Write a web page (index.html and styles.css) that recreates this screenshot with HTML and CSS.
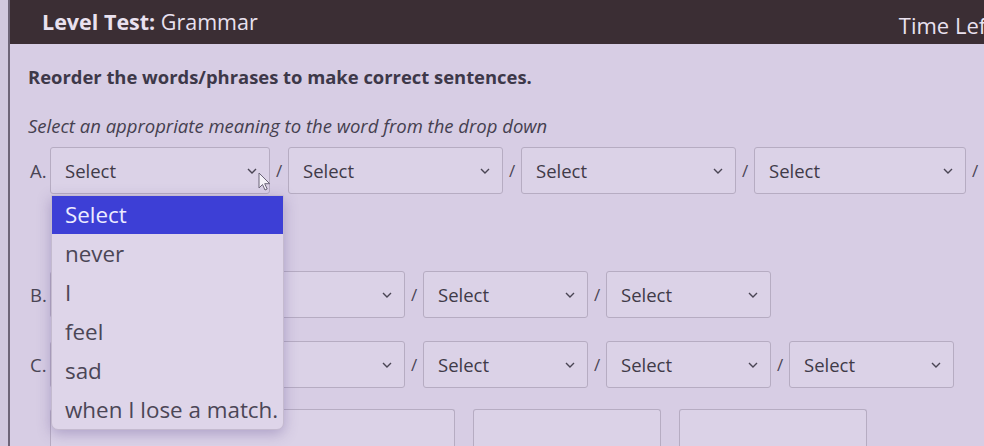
FILE: index.html
```html
<!DOCTYPE html>
<html lang="en">
<head>
<meta charset="utf-8">
<title>Level Test: Grammar</title>
<link rel="stylesheet" href="styles.css">
</head>
<body>
<div class="card">
  <div class="header">
    <div class="title"><b>Level Test:</b> Grammar</div>
    <div class="time">Time Left</div>
  </div>
  <div class="content">
    <p class="instr">Reorder the words/phrases to make correct sentences.</p>
    <p class="sub">Select an appropriate meaning to the word from the drop down</p>

    <div class="row row-a">
      <span class="label">A.</span>
      <div class="sel w-a1"><span>Select</span><svg class="chev" viewBox="0 0 10 6"><path d="M1 1l4 4 4-4"/></svg></div>
      <span class="sep">/</span>
      <div class="sel w-a"><span>Select</span><svg class="chev" viewBox="0 0 10 6"><path d="M1 1l4 4 4-4"/></svg></div>
      <span class="sep">/</span>
      <div class="sel w-a"><span>Select</span><svg class="chev" viewBox="0 0 10 6"><path d="M1 1l4 4 4-4"/></svg></div>
      <span class="sep">/</span>
      <div class="sel w-a4"><span>Select</span><svg class="chev" viewBox="0 0 10 6"><path d="M1 1l4 4 4-4"/></svg></div>
      <span class="sep">/</span>
    </div>

    <div class="row row-b">
      <span class="label">B.</span>
      <div class="sel w-long"><span>Select</span><svg class="chev" viewBox="0 0 10 6"><path d="M1 1l4 4 4-4"/></svg></div>
      <span class="sep">/</span>
      <div class="sel w-b"><span>Select</span><svg class="chev" viewBox="0 0 10 6"><path d="M1 1l4 4 4-4"/></svg></div>
      <span class="sep">/</span>
      <div class="sel w-b"><span>Select</span><svg class="chev" viewBox="0 0 10 6"><path d="M1 1l4 4 4-4"/></svg></div>
    </div>

    <div class="row row-c">
      <span class="label">C.</span>
      <div class="sel w-long"><span>Select</span><svg class="chev" viewBox="0 0 10 6"><path d="M1 1l4 4 4-4"/></svg></div>
      <span class="sep">/</span>
      <div class="sel w-b"><span>Select</span><svg class="chev" viewBox="0 0 10 6"><path d="M1 1l4 4 4-4"/></svg></div>
      <span class="sep">/</span>
      <div class="sel w-b"><span>Select</span><svg class="chev" viewBox="0 0 10 6"><path d="M1 1l4 4 4-4"/></svg></div>
      <span class="sep">/</span>
      <div class="sel w-b"><span>Select</span><svg class="chev" viewBox="0 0 10 6"><path d="M1 1l4 4 4-4"/></svg></div>
    </div>

    <div class="row row-d">
      <span class="label"></span>
      <div class="sel w-d1"></div>
      <span class="sep"></span>
      <div class="sel w-d"></div>
      <span class="sep"></span>
      <div class="sel w-d"></div>
    </div>
  </div>

  <ul class="menu">
    <li class="active">Select</li>
    <li>never</li>
    <li>I</li>
    <li>feel</li>
    <li>sad</li>
    <li>when I lose a match.</li>
  </ul>

  <svg class="cursor" viewBox="0 0 12 19"><path d="M1 1v15l3.5-3.5 2.5 5.5 2.2-1-2.5-5.3h5z"/></svg>
</div>
</body>
</html>
```

FILE: styles.css
```css
html, body {
  margin: 0;
  padding: 0;
  width: 984px;
  height: 446px;
  overflow: hidden;
  background: #d2c8df;
  font-family: "Open Sans", "Noto Sans", sans-serif;
}

.card {
  position: relative;
  margin-left: 8px;
  width: 990px;
  height: 446px;
  background: #d7cde4;
  border-left: 2px solid #6e6478;
  box-sizing: border-box;
}

.header {
  height: 44px;
  background: #3b2e34;
  display: flex;
  align-items: center;
  justify-content: space-between;
  padding: 0 0 0 32px;
  color: #e9e1ef;
  font-size: 21.5px;
}

.title {
  margin-top: -2px;
}

.title b {
  font-weight: 700;
}

.time {
  margin-top: 6px;
  margin-right: 4px;
  font-size: 22px;
}

.content {
  padding: 20px 0 0 18px;
  color: #3d3849;
}

.instr {
  margin: 0;
  font-size: 18.4px;
  font-weight: 700;
  line-height: 26px;
}

.sub {
  margin: 23px 0 0;
  font-size: 18.5px;
  font-style: italic;
  line-height: 26px;
  color: #45404f;
}

.row {
  display: flex;
  align-items: center;
  font-size: 18.5px;
}

.row-a { margin-top: 8px; }
.row-b { margin-top: 77px; }
.row-c { margin-top: 23px; }
.row-d { margin-top: 21px; }

.label {
  width: 22px;
  padding-left: 2px;
  box-sizing: border-box;
  color: #4a4554;
}

.sel {
  height: 47px;
  box-sizing: border-box;
  border: 1px solid #b6acc2;
  border-radius: 3px;
  background: #dbd2e7;
  display: flex;
  align-items: center;
  justify-content: space-between;
  padding: 0 12px 0 14px;
  color: #3f3a48;
}

.chev {
  width: 10px;
  height: 6px;
  fill: none;
  stroke: #4a4554;
  stroke-width: 1.4;
}

.sep {
  width: 18px;
  text-align: center;
  color: #4a4554;
  font-size: 17px;
}

.w-a1 { width: 220px; }
.w-a { width: 215px; }
.w-a4 { width: 212px; }
.w-long { width: 355px; }
.w-b { width: 165px; }
.w-d1 { width: 405px; }
.w-d { width: 188px; }

.row-d .sel {
  border-bottom: none;
  border-radius: 3px 3px 0 0;
}

.menu {
  position: absolute;
  left: 41px;
  top: 195px;
  width: 231px;
  margin: 0;
  padding: 0;
  list-style: none;
  background: #ded5e9;
  border: 1px solid #c4bacf;
  border-radius: 0 0 7px 7px;
  box-shadow: 0 4px 14px rgba(90, 70, 140, 0.35);
  overflow: hidden;
  font-size: 22.4px;
  color: #4b4656;
}

.menu li {
  height: 39px;
  line-height: 39px;
  padding-left: 13px;
  white-space: nowrap;
}

.menu li.active {
  height: 38px;
  line-height: 38px;
  background: #3d3fd6;
  color: #ecebff;
}

.cursor {
  position: absolute;
  left: 248px;
  top: 172px;
  width: 12px;
  height: 19px;
  fill: #f4f2f8;
  stroke: #6b6478;
  stroke-width: 1;
}
```
